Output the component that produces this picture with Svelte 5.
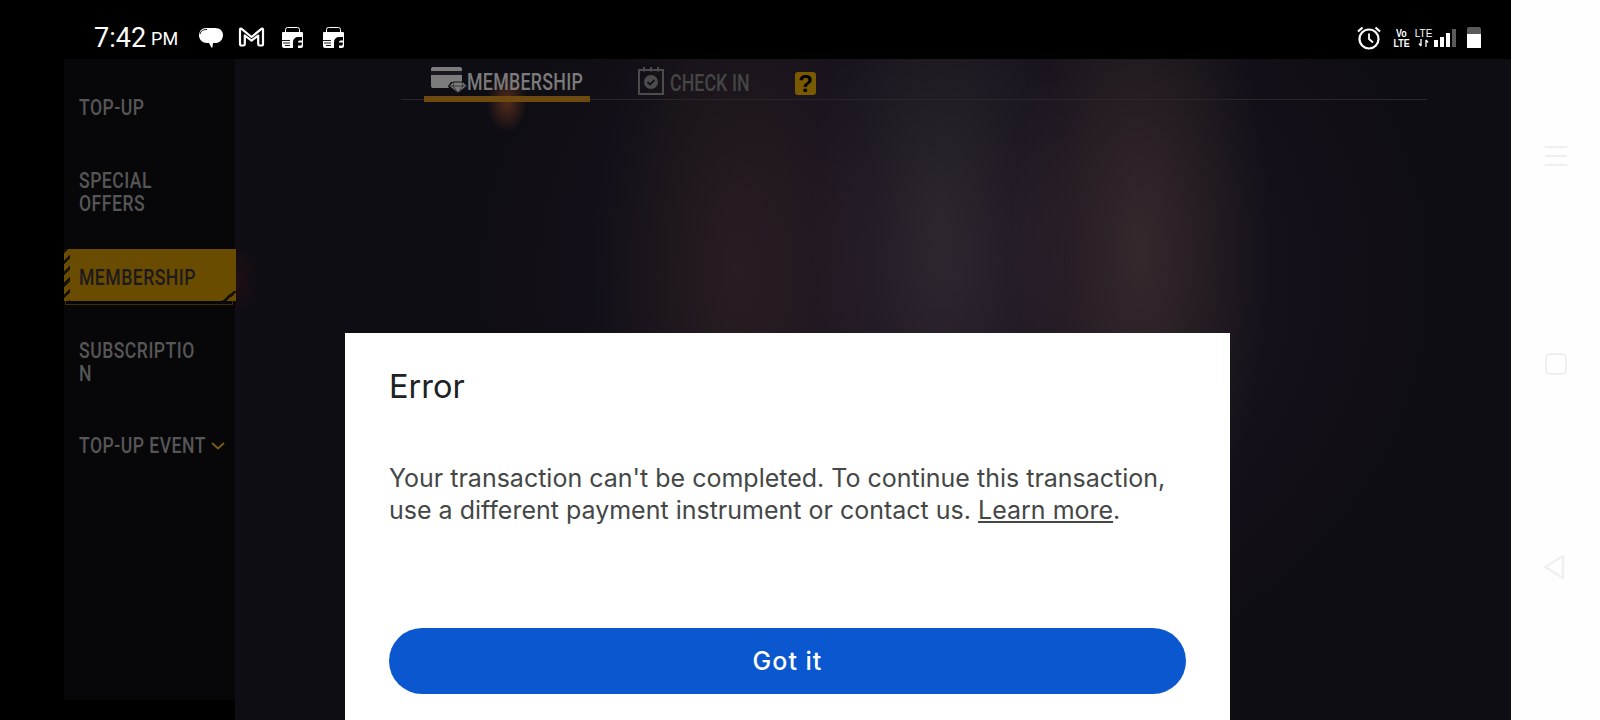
<script>
  const sideItems = [
    { lines: ['TOP-UP'], cls: 'top' },
    { lines: ['SPECIAL', 'OFFERS'], cls: 'special' },
    { lines: ['MEMBERSHIP'], cls: 'active' },
    { lines: ['SUBSCRIPTIO', 'N'], cls: 'sub' },
    { lines: ['TOP-UP EVENT'], cls: 'event', chevron: true }
  ];
</script>

{#snippet bag()}
  <svg class="ic bag" viewBox="0 0 21 21" width="21" height="21">
    <path d="M1 5h19a1 1 0 0 1 1 1v13a2 2 0 0 1-2 2H2a2 2 0 0 1-2-2V6a1 1 0 0 1 1-1z" fill="#fff"/>
    <path d="M3.500 6V2.500A2 2 0 0 1 5.500.5h10a2 2 0 0 1 2 2V6" fill="none" stroke="#fff" stroke-width="1"/>
    <path d="M11 21v-6a5 5 0 0 1 5-5h4v3.500h-2.500a1.500 1.500 0 0 0-1.500 1.500v.5h4l-.6 3H16v3z" fill="#000"/>
    <path d="M0 13.500h8M1 16h7M3 18.500h5" stroke="#000" stroke-width=".9"/>
  </svg>
{/snippet}

<div class="page">
  <div class="phone">
    <header class="status">
      <div class="status-left">
        <span class="time">7:42</span>
        <span class="ampm">PM</span>
        <svg class="ic chat" viewBox="0 0 24 22" width="24" height="22">
          <path d="M7 1h9c5 0 8 2.800 8 7s-3 8-7 8h-3l-.500 4c-.2.800-.9.800-1.300.2L10 16H8C3.500 16 0 12.500 0 8.500 0 4 3 1 7 1z" fill="#fff"/>
          <path d="M1 7C2 3.500 4.500 2.500 8 2.500" stroke="#000" stroke-width="1" fill="none"/>
        </svg>
        <svg class="ic gmail" viewBox="0 0 27 21" width="27" height="21">
          <path d="M2 2.500c0-.900 1-1.200 1.600-.6l9.900 8.100 9.900-8.100c.6-.6 1.600-.3 1.600.6v14.500c0 1-.6 1.500-1.500 1.500h-2c-.9 0-1.300-.5-1.300-1.400V8.500l-6.700 5.200-6.700-5.200v8.600c0 .9-.4 1.400-1.300 1.400h-2C2.600 18.500 2 18 2 17z" fill="none" stroke="#fff" stroke-width="2.200" stroke-linejoin="round"/>
        </svg>
        {@render bag()}
        {@render bag()}
      </div>
      <div class="status-right">
        <svg class="ic alarm" viewBox="0 0 24 24" width="24" height="24">
          <circle cx="12" cy="13" r="9.500" fill="none" stroke="#fff" stroke-width="2.200"/>
          <path d="M12 7.500V13l4 3.500" fill="none" stroke="#fff" stroke-width="1.800"/>
          <path d="M1 5.500 5.500 1.500M23 5.500 18.500 1.500" stroke="#fff" stroke-width="2.200"/>
        </svg>
        <span class="volte"><b>Vo</b><b>LTE</b></span>
        <span class="lte">
          <span>LTE</span>
          <svg viewBox="0 0 12 8" width="12" height="8"><path d="M3 0v7M1 4.500 3 7M8 8V1M10 3.500 8 1" stroke="#fff" stroke-width="1.300" fill="none"/></svg>
        </span>
        <span class="signal"><i class="s1"></i><i class="s2"></i><i class="s3"></i><i class="s4"></i></span>
        <span class="battery"><i></i></span>
      </div>
    </header>

    <div class="game">
      <aside class="sidebar">
        {#each sideItems as item}
          <div class="side-item {item.cls}">
            <span class="side-text">
              {#each item.lines as line}<span class="line">{line}</span>{/each}
            </span>
            {#if item.chevron}
              <svg class="chev" viewBox="0 0 14 8" width="14" height="8"><path d="M1 1l6 5.500L13 1" fill="none" stroke="#7a5c12" stroke-width="1.800"/></svg>
            {/if}
            {#if item.cls === 'active'}
              <span class="corner"></span>
            {/if}
          </div>
        {/each}
      </aside>

      <section class="content">
        <nav class="tabs">
          <div class="tab current">
            <svg class="tab-ic" viewBox="0 0 36 26" width="36" height="26">
              <path d="M2 0h27a2 2 0 0 1 2 2v13H20l-3 4 1 2H2a2 2 0 0 1-2-2V2a2 2 0 0 1 2-2z" fill="#7c7c7c"/>
              <rect x="0" y="4" width="31" height="4" fill="#1b1820"/>
              <path d="M22 15h10l4 4-9 7-9-7z" fill="#7c7c7c" stroke="#17141b" stroke-width="1"/>
              <path d="M18 19h18M23 15l-1 4 5 7 5-7-1-4" fill="none" stroke="#2b282c" stroke-width=".8"/>
            </svg>
            <span class="tab-text">MEMBERSHIP</span>
          </div>
          <div class="tab check">
            <svg class="tab-ic" viewBox="0 0 26 28" width="26" height="28">
              <path d="M1 3h24v24H1z" fill="none" stroke="#4c4c4c" stroke-width="2"/>
              <path d="M6 0v5M13 0v5M20 0v5" stroke="#4c4c4c" stroke-width="2" stroke-dasharray="2.500 2"/>
              <circle cx="13" cy="15" r="7" fill="#4c4c4c"/>
              <path d="M9.500 15l2.500 2.500 4.500-4.500" fill="none" stroke="#15121a" stroke-width="1.800"/>
            </svg>
            <span class="tab-text">CHECK IN</span>
          </div>
          <span class="help">?</span>
        </nav>
      </section>

      <div class="modal">
        <h2>Error</h2>
        <p>Your transaction can't be completed. To continue this transaction, use a different payment instrument or contact us. <a href="#learn">Learn more</a>.</p>
        <button>Got it</button>
      </div>
    </div>
  </div>

  <aside class="softkeys">
    <span class="menu"><i></i><i></i><i></i></span>
    <span class="home"></span>
    <svg class="back" viewBox="0 0 24 28" width="24" height="28">
      <path d="M21 3 3 14l18 11z" fill="none" stroke="#f0f0f0" stroke-width="2.500" stroke-linejoin="round"/>
    </svg>
  </aside>
</div>

<style>
  :global(body) {
    margin: 0;
    background: #000;
    overflow: hidden;
  }

  .page {
    display: flex;
    width: 1600px;
    height: 720px;
    overflow: hidden;
    font-family: Roboto, sans-serif;
  }

  .phone {
    width: 1511px;
    display: flex;
    flex-direction: column;
  }

  .status {
    height: 59px;
    flex-shrink: 0;
    background: #000;
    color: #fff;
    display: flex;
    justify-content: space-between;
    align-items: center;
    padding: 16px 30px 0 94px;
    box-sizing: border-box;
  }

  .status-left,
  .status-right {
    display: flex;
    align-items: center;
  }

  .ic {
    display: block;
    flex-shrink: 0;
  }

  .time {
    font-size: 27px;
    line-height: 30px;
  }

  .ampm {
    font-size: 18px;
    line-height: 30px;
    margin: 3px 0 0 5px;
  }

  .chat {
    margin-left: 21px;
  }

  .gmail {
    margin-left: 15px;
  }

  .bag {
    margin-left: 17px;
  }

  .bag + .bag {
    margin-left: 20px;
  }

  .volte {
    margin-left: 14px;
    display: flex;
    flex-direction: column;
    align-items: center;
    width: 13px;
    font-size: 10.500px;
    line-height: 10px;
    font-family: "Liberation Sans", sans-serif;
  }

  .volte b {
    transform: scaleX(0.85);
  }

  .lte {
    margin-left: 7px;
    width: 17px;
    display: flex;
    flex-direction: column;
    align-items: center;
    font-size: 10px;
    line-height: 10px;
    font-family: "Liberation Sans", sans-serif;
  }

  .signal {
    margin-left: 2px;
    height: 18px;
    display: flex;
    align-items: flex-end;
    gap: 2px;
  }

  .signal i {
    width: 4px;
    background: #fff;
  }

  .s1 { height: 7px; }
  .s2 { height: 10px; }
  .s3 { height: 14px; }
  .signal .s4 { height: 18px; background: #5a5a5a; }

  .battery {
    margin-left: 11px;
    width: 14px;
    height: 21px;
    border-radius: 2px 2px 0 0;
    background: #5a5a5a;
    display: flex;
    align-items: flex-end;
  }

  .battery i {
    width: 100%;
    height: 14px;
    background: #fff;
  }

  .game {
    position: relative;
    flex: 1;
    display: flex;
    padding-left: 64px;
    background: #000;
    overflow: hidden;
  }

  .sidebar {
    width: 171px;
    height: 641px;
    flex-shrink: 0;
    background: #070609;
    box-sizing: border-box;
    padding-top: 37px;
    position: relative;
    z-index: 1;
  }

  .side-item {
    position: relative;
    padding-left: 15px;
    display: flex;
    align-items: center;
    gap: 6px;
    color: #565656;
    font-size: 22px;
    line-height: 23px;
    font-weight: 500;
    letter-spacing: 0.6px;
  }

  .side-text {
    display: block;
  }

  .line {
    display: block;
    white-space: nowrap;
    width: 80%;
    transform: scaleX(0.8);
    transform-origin: left center;
  }

  .side-item.special {
    margin-top: 50px;
  }

  .side-item.active {
    margin-top: 34px;
    height: 52px;
    color: #1c1a1f;
    padding-top: 4px;
    box-sizing: border-box;
    background-image: repeating-linear-gradient(135deg, #17130a 0 3px, transparent 3px 8px);
    background-size: 6px 100%;
    background-repeat: no-repeat;
    background-color: #6a4c00;
    width: 172px;
  }

  .side-item.active::after {
    content: "";
    position: absolute;
    left: 1px;
    right: 3px;
    top: 52px;
    height: 4px;
    box-sizing: border-box;
    border: 1px solid #3f2f08;
    border-top: 0;
  }

  .corner {
    position: absolute;
    right: 0;
    bottom: 0;
    width: 14px;
    height: 10px;
    background: linear-gradient(140deg, transparent 45%, #17130a 45% 62%, transparent 62%);
  }

  .side-item.sub {
    margin-top: 38px;
  }

  .side-item.event {
    margin-top: 49px;
  }

  .chev {
    margin-left: -33px;
  }

  .content {
    flex: 1;
    position: relative;
    background:
      radial-gradient(ellipse 20px 30px at 272px 43px, rgba(150, 75, 35, 0.5), transparent),
      radial-gradient(ellipse 24px 40px at 0px 220px, rgba(90, 20, 20, 0.2), transparent),
      radial-gradient(ellipse 140px 340px at 500px 210px, rgba(90, 62, 48, 0.24), transparent),
      radial-gradient(ellipse 130px 320px at 705px 170px, rgba(85, 85, 75, 0.26), transparent),
      radial-gradient(ellipse 130px 330px at 905px 190px, rgba(100, 78, 68, 0.36), transparent),
      radial-gradient(ellipse 480px 420px at 720px 220px, rgba(50, 32, 55, 0.5), transparent),
      #0f0d14;
  }

  .tabs {
    position: absolute;
    left: 166px;
    top: 0;
    width: 1026px;
    height: 40px;
    border-bottom: 1px solid #2a2629;
    display: flex;
    align-items: flex-start;
  }

  .tab {
    display: flex;
    align-items: center;
    height: 43px;
    box-sizing: border-box;
    color: #7b7b7b;
    font-size: 24px;
    font-weight: 500;
  }

  .tab-text {
    display: inline-block;
    width: 117px;
    white-space: nowrap;
    transform: scaleX(0.74);
    transform-origin: left center;
    letter-spacing: 0.4px;
  }

  .tab.current {
    margin-left: 23px;
    width: 166px;
    padding-left: 7px;
    border-bottom: 6px solid #6f4a10;
  }

  .tab.current .tab-ic {
    margin-top: 5px;
  }

  .tab.current .tab-text {
    margin-top: 8px;
  }

  .tab.check {
    margin-left: 48px;
    color: #454545;
  }

  .tab.check .tab-text {
    margin-left: 6px;
    width: 92px;
    margin-top: 5px;
    letter-spacing: 0.1px;
  }

  .help {
    margin: 13px 0 0 33px;
    width: 21px;
    height: 23px;
    background: #7a5a00;
    border-radius: 3px;
    color: #000;
    font: 700 24px/24px "Liberation Sans", sans-serif;
    text-align: center;
  }

  .modal {
    position: absolute;
    left: 345px;
    top: 274px;
    width: 885px;
    height: 400px;
    background: #fff;
    box-sizing: border-box;
    padding: 0 44px;
    z-index: 2;
    font-family: Inter, sans-serif;
  }

  h2 {
    margin: 30px 0 0;
    font-size: 32.500px;
    line-height: 48px;
    font-weight: 400;
    color: #202124;
  }

  p {
    margin: 51px 0 0;
    font-size: 25px;
    line-height: 32px;
    color: #444746;
  }

  a {
    color: inherit;
  }

  button {
    display: block;
    width: 797px;
    height: 66px;
    margin-top: 102px;
    border: 0;
    border-radius: 33px;
    background: #0b57d0;
    color: #fff;
    font-family: Inter, sans-serif;
    font-size: 25px;
    font-weight: 500;
    letter-spacing: 1px;
  }

  .softkeys {
    width: 89px;
    height: 720px;
    background: #fefefe;
    position: relative;
    display: flex;
    flex-direction: column;
    align-items: center;
    padding: 146px 0 0 0;
    box-sizing: border-box;
  }

  .menu {
    width: 22px;
    display: flex;
    flex-direction: column;
    gap: 7px;
  }

  .menu i {
    height: 2px;
    background: #f0f0f0;
  }

  .home {
    margin-top: 187px;
    width: 22px;
    height: 22px;
    box-sizing: border-box;
    border: 2px solid #f0f0f0;
    border-radius: 5px;
  }

  .back {
    margin: 178px 3px 0 0;
  }
</style>
